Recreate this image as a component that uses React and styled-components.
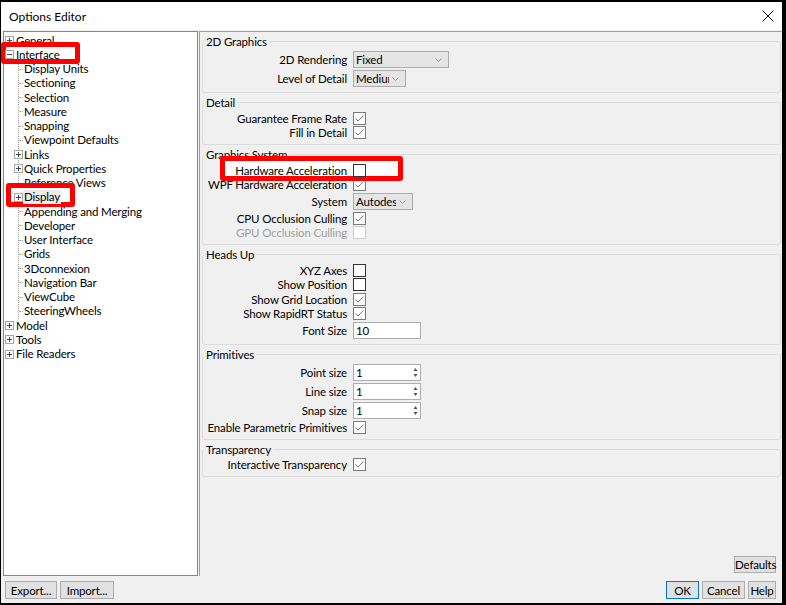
import React from 'react'
import styled, { createGlobalStyle, css } from 'styled-components'

const GlobalStyle = createGlobalStyle`
  html, body {
    margin: 0;
    padding: 0;
    background: #ffffff;
  }
  body {
    font-family: 'Segoe UI', Lato, 'Noto Sans', sans-serif;
    font-size: 11.5px;
    letter-spacing: -0.15px;
    color: #000;
  }
`

const Window = styled.div`
  position: relative;
  width: 786px;
  height: 605px;
  box-sizing: border-box;
  border-style: solid;
  border-color: #000;
  border-width: 2px 4px 2px 1px;
  background: #f0f0f0;
  display: flex;
  flex-direction: column;
`

const TitleBar = styled.div`
  height: 28px;
  background: #fff;
  display: flex;
  align-items: center;
  justify-content: space-between;
  padding-left: 8px;
  font-size: 12px;
  letter-spacing: 0;
`

const CloseButton = styled.span`
  display: flex;
  margin-right: 8px;
`

const Body = styled.div`
  flex: 1;
  display: flex;
  flex-direction: column;
  min-height: 0;
`

const Main = styled.div`
  height: 545px;
  display: flex;
  gap: 1px;
  padding: 1px 0 0 2px;
`

const Tree = styled.div`
  width: 195px;
  box-sizing: border-box;
  border: 1px solid #828790;
  background: #fff;
  padding-top: 1.5px;
`

const TreeRow = styled.div`
  position: relative;
  height: 14.25px;
  display: flex;
  align-items: center;
  white-space: nowrap;
  padding-left: ${(p) => (p.$level ? 0 : 1)}px;
  ${(p) =>
    p.$mark &&
    css`
      z-index: 1;
      &::before {
        content: '';
        position: absolute;
        left: ${p.$mark.l}px;
        top: ${p.$mark.t}px;
        width: ${p.$mark.w}px;
        height: ${p.$mark.h}px;
        box-sizing: border-box;
        border: 5px solid #ff0000;
        border-radius: 3px;
        background: #fff;
        z-index: -1;
      }
    `}
`

const Connector = styled.span`
  width: 4px;
  height: 0;
  border-top: 1px dotted #a0a0a0;
`

const ChildList = styled.div`
  margin-left: 14px;
  border-left: 1px dotted #a0a0a0;
`

const ExpanderBox = styled.span`
  display: flex;
  width: 9px;
  height: 9px;
  margin-right: ${(p) => (p.$level ? 0 : 1)}px;
  margin-left: ${(p) => (p.$level ? -5 : 0)}px;
  background: #fff;
`

const NodeLabel = styled.span`
  padding: 0 1px;
  line-height: 14px;
  background: ${(p) => (p.$selected ? '#ececec' : 'transparent')};
`

const Panel = styled.div`
  flex: 1;
  box-sizing: border-box;
  border-top: 1px solid #a0a0a0;
  border-left: 1px solid #a0a0a0;
  padding: 2px 1px 0 2px;
  display: flex;
  flex-direction: column;
`

const Group = styled.fieldset`
  margin: 0 0 2px;
  padding: 1px 0 4px;
  border: 1px solid #dcdcdc;
  border-radius: 3px;
  min-width: 0;
`

const Legend = styled.legend`
  padding: 0 2px;
  margin-left: 1px;
  line-height: 15px;
`

const Row = styled.div`
  position: relative;
  display: grid;
  grid-template-columns: 144px auto;
  column-gap: 6px;
  align-items: center;
  justify-items: start;
  height: ${(p) => (p.$tall ? 19 : 14.5)}px;
  ${(p) =>
    p.$mark &&
    css`
      z-index: 1;
      &::before {
        content: '';
        position: absolute;
        left: 17px;
        top: -7px;
        width: 183px;
        height: 25px;
        box-sizing: border-box;
        border: 5px solid #ff0000;
        border-radius: 3px;
        background: #fff;
        z-index: -1;
      }
    `}
`

const Label = styled.span`
  justify-self: end;
  white-space: nowrap;
  color: ${(p) => (p.$disabled ? '#a0a0a0' : '#000')};
`

const Box = styled.span`
  display: flex;
  align-items: center;
  justify-content: center;
  width: 13px;
  height: 13px;
  box-sizing: border-box;
  background: #fff;
  border: 1px solid
    ${(p) => (p.$disabled ? '#cccccc' : p.$checked ? '#7a7a7a' : '#333333')};
`

const Select = styled.div`
  width: ${(p) => p.$w}px;
  height: 17px;
  box-sizing: border-box;
  border: 1px solid #acacac;
  background: #e5e5e5;
  display: flex;
  align-items: center;
  padding-left: 2px;
`

const SelectText = styled.span`
  flex: 1;
  overflow: hidden;
  white-space: nowrap;
`

const Chevron = styled.span`
  display: flex;
  margin: 0 6px 0 3px;
`

const Field = styled.div`
  width: 68px;
  height: 17px;
  box-sizing: border-box;
  border: 1px solid #abadb3;
  background: #fff;
  display: flex;
  align-items: center;
  padding-left: 2px;
`

const FieldText = styled.span`
  flex: 1;
`

const Spinner = styled.span`
  display: flex;
  margin-right: 2px;
`

const Button = styled.button`
  font: inherit;
  letter-spacing: inherit;
  width: ${(p) => p.$w}px;
  height: ${(p) => p.$h || 18}px;
  padding: 0;
  box-sizing: border-box;
  border: 1px solid ${(p) => (p.$primary ? '#0078d7' : '#adadad')};
  background: #e1e1e1;
  color: #000;
`

const DefaultsButton = styled(Button)`
  margin: auto 5px 3px 0;
  align-self: flex-end;
`

const Footer = styled.div`
  display: flex;
  justify-content: space-between;
  padding: 5px 6px 0 4px;
`

const ButtonGroup = styled.div`
  display: flex;
  gap: 3px;
`

const tree = [
  { label: 'General', exp: '+' },
  {
    label: 'Interface',
    exp: '-',
    mark: { l: -3, t: -6, w: 79, h: 22 },
    children: [
      { label: 'Display Units' },
      { label: 'Sectioning' },
      { label: 'Selection' },
      { label: 'Measure' },
      { label: 'Snapping' },
      { label: 'Viewpoint Defaults' },
      { label: 'Links', exp: '+' },
      { label: 'Quick Properties', exp: '+' },
      { label: 'Reference Views' },
      { label: 'Display', exp: '+', selected: true, mark: { l: -13, t: -7, w: 69, h: 24 } },
      { label: 'Appending and Merging' },
      { label: 'Developer' },
      { label: 'User Interface' },
      { label: 'Grids' },
      { label: '3Dconnexion' },
      { label: 'Navigation Bar' },
      { label: 'ViewCube' },
      { label: 'SteeringWheels' },
    ],
  },
  { label: 'Model', exp: '+' },
  { label: 'Tools', exp: '+' },
  { label: 'File Readers', exp: '+' },
]

const groups = [
  {
    title: '2D Graphics',
    rows: [
      { label: '2D Rendering', type: 'select', value: 'Fixed', w: 96 },
      { label: 'Level of Detail', type: 'select', value: 'Medium', w: 53 },
    ],
  },
  {
    title: 'Detail',
    rows: [
      { label: 'Guarantee Frame Rate', type: 'check', checked: true },
      { label: 'Fill in Detail', type: 'check', checked: true },
    ],
  },
  {
    title: 'Graphics System',
    rows: [
      { label: 'Hardware Acceleration', type: 'check', mark: true },
      { label: 'WPF Hardware Acceleration', type: 'check', checked: true },
      { label: 'System', type: 'select', value: 'Autodesk', w: 60 },
      { label: 'CPU Occlusion Culling', type: 'check', checked: true },
      { label: 'GPU Occlusion Culling', type: 'check', disabled: true },
    ],
  },
  {
    title: 'Heads Up',
    rows: [
      { label: 'XYZ Axes', type: 'check' },
      { label: 'Show Position', type: 'check' },
      { label: 'Show Grid Location', type: 'check', checked: true },
      { label: 'Show RapidRT Status', type: 'check', checked: true },
      { label: 'Font Size', type: 'text', value: '10' },
    ],
  },
  {
    title: 'Primitives',
    rows: [
      { label: 'Point size', type: 'spin', value: '1' },
      { label: 'Line size', type: 'spin', value: '1' },
      { label: 'Snap size', type: 'spin', value: '1' },
      { label: 'Enable Parametric Primitives', type: 'check', checked: true },
    ],
  },
  {
    title: 'Transparency',
    rows: [{ label: 'Interactive Transparency', type: 'check', checked: true }],
  },
]

const Expander = ({ sign, level }) => (
  <ExpanderBox $level={level}>
    <svg width="9" height="9" viewBox="0 0 9 9">
      <rect x="0.5" y="0.5" width="8" height="8" fill="#fff" stroke="#a5a5a5" />
      <line x1="2" y1="4.5" x2="7" y2="4.5" stroke="#3c4a6a" />
      {sign === '+' && <line x1="4.5" y1="2" x2="4.5" y2="7" stroke="#3c4a6a" />}
    </svg>
  </ExpanderBox>
)

const Node = ({ item, level }) => (
  <TreeRow $level={level} $mark={item.mark}>
    {item.exp ? <Expander sign={item.exp} level={level} /> : <Connector />}
    <NodeLabel $selected={item.selected}>{item.label}</NodeLabel>
  </TreeRow>
)

const CheckBox = ({ checked, disabled }) => (
  <Box $checked={checked} $disabled={disabled}>
    {checked && (
      <svg width="11" height="11" viewBox="0 0 11 11">
        <path d="M1.5 5.5 L4 8 L9.5 2.5" fill="none" stroke="#7a7a7a" strokeWidth="1" />
      </svg>
    )}
  </Box>
)

const Control = ({ row }) => {
  if (row.type === 'check') return <CheckBox checked={row.checked} disabled={row.disabled} />
  if (row.type === 'select')
    return (
      <Select $w={row.w}>
        <SelectText>{row.value}</SelectText>
        <Chevron>
          <svg width="7" height="4" viewBox="0 0 7 4">
            <path d="M0.5 0.5 L3.5 3.5 L6.5 0.5" fill="none" stroke="#999" />
          </svg>
        </Chevron>
      </Select>
    )
  return (
    <Field>
      <FieldText>{row.value}</FieldText>
      {row.type === 'spin' && (
        <Spinner>
          <svg width="5" height="13" viewBox="0 0 5 13">
            <path d="M2.5 2 L4.5 5 L0.5 5 Z" fill="#555" />
            <path d="M0.5 8 L4.5 8 L2.5 11 Z" fill="#555" />
          </svg>
        </Spinner>
      )}
    </Field>
  )
}

const App = () => {
  return (
    <>
      <GlobalStyle />
      <Window>
        <TitleBar>
          <span>Options Editor</span>
          <CloseButton>
            <svg width="12" height="12" viewBox="0 0 12 12">
              <path d="M0.5 0.5 L11.5 11.5 M11.5 0.5 L0.5 11.5" stroke="#000" strokeWidth="1" />
            </svg>
          </CloseButton>
        </TitleBar>
        <Body>
          <Main>
            <Tree>
              {tree.map((item) => (
                <React.Fragment key={item.label}>
                  <Node item={item} level={0} />
                  {item.children && (
                    <ChildList>
                      {item.children.map((child) => (
                        <Node key={child.label} item={child} level={1} />
                      ))}
                    </ChildList>
                  )}
                </React.Fragment>
              ))}
            </Tree>
            <Panel>
              {groups.map((g) => (
                <Group key={g.title}>
                  <Legend>{g.title}</Legend>
                  {g.rows.map((row) => (
                    <Row
                      key={row.label}
                      $tall={row.type !== 'check'}
                      $mark={row.mark}
                    >
                      <Label $disabled={row.disabled}>{row.label}</Label>
                      <Control row={row} />
                    </Row>
                  ))}
                </Group>
              ))}
              <DefaultsButton $w={42} $h={17}>
                Defaults
              </DefaultsButton>
            </Panel>
          </Main>
          <Footer>
            <ButtonGroup>
              <Button $w={52}>Export...</Button>
              <Button $w={54}>Import...</Button>
            </ButtonGroup>
            <ButtonGroup>
              <Button $w={33} $primary>
                OK
              </Button>
              <Button $w={43}>Cancel</Button>
              <Button $w={28}>Help</Button>
            </ButtonGroup>
          </Footer>
        </Body>
      </Window>
    </>
  )
}

export default App
